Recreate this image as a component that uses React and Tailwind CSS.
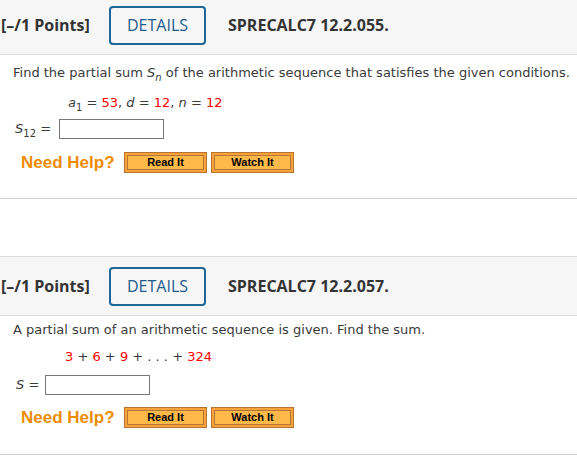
const HEAD_FONT = { fontFamily: '"Open Sans", "Noto Sans", sans-serif' };
const BODY_FONT = { fontFamily: '"DejaVu Sans", Verdana, sans-serif' };
const ARIAL = { fontFamily: '"Liberation Sans", Arial, sans-serif' };

function Header({ code }) {
  return (
    <div
      className="flex h-[60px] items-center border-y border-[#dcdcdc] bg-[#f6f6f6] text-[#333]"
      style={HEAD_FONT}
    >
      <span className="ml-px w-[108px] text-[16px] font-bold">[–/1 Points]</span>
      <div className="flex h-[39px] w-[97px] items-center justify-center rounded-[4px] border-2 border-[#1f6699] text-[16px] text-[#1f5a8c]">
        DETAILS
      </div>
      <span className="ml-[22px] text-[16px] font-bold">{code}</span>
    </div>
  );
}

function HelpRow() {
  return (
    <div className="flex h-[21px] items-center" style={ARIAL}>
      <span className="ml-[21px] w-[103px] text-[17px] font-bold leading-none text-[#f08c00]">Need Help?</span>
      {["Read It", "Watch It"].map((t) => (
        <div key={t} className="mr-[4px] h-[21px] w-[83px] border border-[#b8732f] bg-[#f7a23a] p-[2px]">
          <div className="flex h-full items-center justify-center border border-[#b97534] bg-[#ffb84a] text-[11px] font-bold leading-none text-black">
            {t}
          </div>
        </div>
      ))}
    </div>
  );
}

const red = "text-[#f00]";
const sub = "relative top-[4px] align-baseline text-[10px] leading-none";

export default function App() {
  return (
    <div className="w-[577px] overflow-hidden bg-white">
      <div className="-mt-[5px]">
        <Header code="SPRECALC7 12.2.055." />
      </div>
      <div className="text-[13px] text-[#3a3a3a]" style={BODY_FONT}>
        <p className="ml-[13px] mt-[10px] leading-[16px]">
          Find the partial sum <i>S</i>
          <sub className={sub}><i>n</i></sub> of the arithmetic sequence that satisfies the given conditions.
        </p>
        <p className="ml-[68px] mt-[14px] leading-[16px]">
          <i>a</i><sub className={sub}>1</sub> = <span className={red}>53</span>, <i>d</i> ={" "}
          <span className={red}>12</span>, <i>n</i> = <span className={red}>12</span>
        </p>
        <div className="mt-[8px] flex h-[20px] items-center leading-[16px]">
          <span className="ml-[15px] w-[44px]">
            <i>S</i><sub className={sub}>12</sub> =
          </span>
          <div className="h-[20px] w-[105px] border border-[#777] bg-white" />
        </div>
        <div className="mt-[13px]">
          <HelpRow />
        </div>
      </div>
      <div className="mt-[25px] border-b border-[#d0d0d0]" />
      <div className="h-[57px]" />
      <Header code="SPRECALC7 12.2.057." />
      <div className="text-[13px] text-[#3a3a3a]" style={BODY_FONT}>
        <p className="ml-[13px] mt-[6px] leading-[16px]">
          A partial sum of an arithmetic sequence is given. Find the sum.
        </p>
        <p className="ml-[65px] mt-[11px] leading-[16px]">
          <span className={red}>3</span> + <span className={red}>6</span> + <span className={red}>9</span> + . . . +{" "}
          <span className={red}>324</span>
        </p>
        <div className="mt-[10px] flex h-[20px] items-center leading-[16px]">
          <span className="ml-[16px] w-[29px]">
            <i>S</i> =
          </span>
          <div className="h-[20px] w-[105px] border border-[#777] bg-white" />
        </div>
        <div className="mt-[12px]">
          <HelpRow />
        </div>
      </div>
      <div className="mt-[26px] border-b border-[#d0d0d0]" />
    </div>
  );
}
